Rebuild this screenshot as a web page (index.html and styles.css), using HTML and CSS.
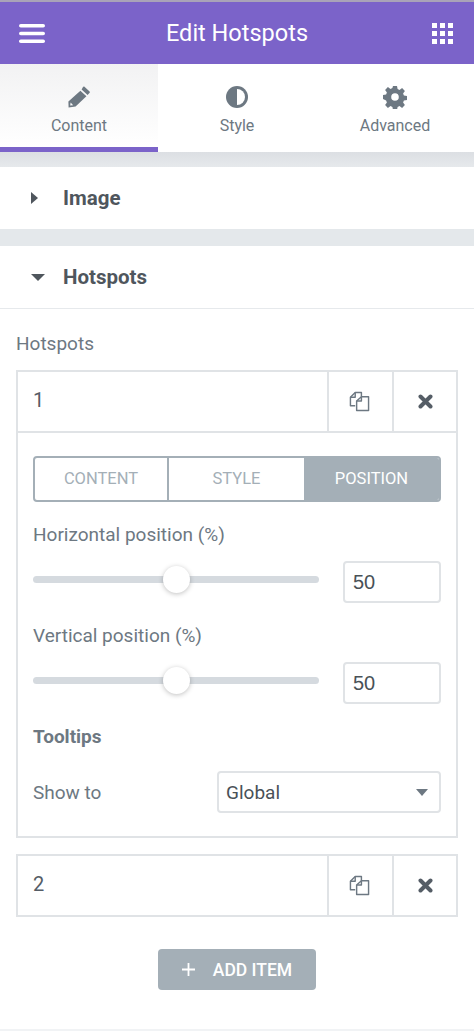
FILE: index.html
```html
<!DOCTYPE html>
<html>

<head>
	<title>Edit Hotspots</title>
	<link rel="stylesheet" href="styles.css">
</head>

<body>
	<div class="panel">

		<header class="topbar">
			<svg class="menu_icon" width="26" height="19" viewBox="0 0 26 19" fill="#fff">
				<rect x="0" y="0" width="26" height="3.6" rx="1.8"/>
				<rect x="0" y="7.7" width="26" height="3.6" rx="1.8"/>
				<rect x="0" y="15.4" width="26" height="3.6" rx="1.8"/>
			</svg>
			<div class="title">Edit Hotspots</div>
			<svg class="grid_icon" width="21" height="21" viewBox="0 0 21 21" fill="#fff">
				<rect x="0" y="0" width="5" height="5"/><rect x="8" y="0" width="5" height="5"/><rect x="16" y="0" width="5" height="5"/>
				<rect x="0" y="8" width="5" height="5"/><rect x="8" y="8" width="5" height="5"/><rect x="16" y="8" width="5" height="5"/>
				<rect x="0" y="16" width="5" height="5"/><rect x="8" y="16" width="5" height="5"/><rect x="16" y="16" width="5" height="5"/>
			</svg>
		</header>

		<nav class="tabs">
			<div class="tab active">
				<svg width="24" height="24" viewBox="0 0 24 24" fill="#6d7882">
					<path d="M17.2 1.6 L22.6 6.4 a1 1 0 0 1 0 1.4 L20.6 10 L14.6 4.6 L16 2 a1 1 0 0 1 1.2-.4z"/>
					<path d="M13.4 5.8 L19.4 11.2 L8.6 21.4 L1.6 22.6 L1.4 16.4z M3.6 17.6 L3.2 20.6 L6.2 20.2z" fill-rule="evenodd"/>
				</svg>
				<span>Content</span>
			</div>
			<div class="tab">
				<svg width="24" height="24" viewBox="0 0 24 24">
					<circle cx="12" cy="12" r="11" fill="#6d7882"/>
					<path d="M12 4 a8 8 0 0 1 0 16z" fill="#fff"/>
				</svg>
				<span>Style</span>
			</div>
			<div class="tab">
				<svg width="24" height="24" viewBox="0 0 24 24" fill="#6d7882">
					<path fill-rule="evenodd" d="M10 1h4l.6 3.1 1.9.8 2.6-1.8 2.8 2.8-1.8 2.6.8 1.9 3.1.6v4l-3.1.6-.8 1.9 1.8 2.6-2.8 2.8-2.6-1.8-1.9.8-.6 3.1h-4l-.6-3.1-1.9-.8-2.6 1.8-2.8-2.8 1.8-2.6-.8-1.9L0 14v-4l3.1-.6.8-1.9L2.1 4.9l2.8-2.8 2.6 1.8 1.9-.8zM12 8.2a3.8 3.8 0 1 0 0 7.6 3.8 3.8 0 0 0 0-7.6z"/>
				</svg>
				<span>Advanced</span>
			</div>
		</nav>

		<div class="gap first"></div>

		<div class="section">
			<span class="arrow_right"></span>
			<span class="section_name">Image</span>
		</div>

		<div class="gap"></div>

		<div class="section open">
			<span class="arrow_down"></span>
			<span class="section_name">Hotspots</span>
		</div>

		<div class="content">
			<div class="repeater_label">Hotspots</div>

			<div class="item">
				<div class="item_num">1</div>
				<div class="item_btn">
					<svg class="copy_icon" width="21" height="21" viewBox="0 0 22 22" fill="#fff" stroke="#6d7882" stroke-width="1.5" stroke-linejoin="round">
						<path d="M6.5 15.5H1.5V6.5L6.5 1.5H13V6"/>
						<path d="M6.5 1.5V6.5H1.5" fill="none"/>
						<path d="M8 20.5V10.5L13 6H20.5V20.5z"/>
						<path d="M13 6V10.5H8" fill="none"/>
					</svg>
				</div>
				<div class="item_btn">
					<svg width="15" height="15" viewBox="0 0 15 15" stroke="#555d66" stroke-width="4" stroke-linecap="round">
						<path d="M2.5 2.5L12.5 12.5M12.5 2.5L2.5 12.5"/>
					</svg>
				</div>
			</div>

			<div class="item_body">
				<div class="switcher">
					<div class="switch">CONTENT</div>
					<div class="switch">STYLE</div>
					<div class="switch on">POSITION</div>
				</div>

				<div class="field_label">Horizontal position (%)</div>
				<div class="slider_row">
					<div class="slider"><span class="thumb"></span></div>
					<div class="number">50</div>
				</div>

				<div class="field_label">Vertical position (%)</div>
				<div class="slider_row">
					<div class="slider"><span class="thumb"></span></div>
					<div class="number">50</div>
				</div>

				<div class="tooltips">Tooltips</div>

				<div class="select_row">
					<div class="select_label">Show to</div>
					<div class="select">
						<span>Global</span>
						<span class="select_arrow"></span>
					</div>
				</div>
			</div>

			<div class="item second_item">
				<div class="item_num">2</div>
				<div class="item_btn">
					<svg class="copy_icon" width="21" height="21" viewBox="0 0 22 22" fill="#fff" stroke="#6d7882" stroke-width="1.5" stroke-linejoin="round">
						<path d="M6.5 15.5H1.5V6.5L6.5 1.5H13V6"/>
						<path d="M6.5 1.5V6.5H1.5" fill="none"/>
						<path d="M8 20.5V10.5L13 6H20.5V20.5z"/>
						<path d="M13 6V10.5H8" fill="none"/>
					</svg>
				</div>
				<div class="item_btn">
					<svg width="15" height="15" viewBox="0 0 15 15" stroke="#555d66" stroke-width="4" stroke-linecap="round">
						<path d="M2.5 2.5L12.5 12.5M12.5 2.5L2.5 12.5"/>
					</svg>
				</div>
			</div>

			<div class="add_wrap">
				<div class="add_item">
					<svg width="13" height="13" viewBox="0 0 13 13" stroke="#fff" stroke-width="1.8">
						<path d="M6.5 0V13M0 6.5H13"/>
					</svg>
					<span>ADD ITEM</span>
				</div>
			</div>
		</div>

	</div>
</body>
</html>
```

FILE: styles.css
```css
* {
	box-sizing: border-box;
}
html, body {
	margin: 0;
	height: 100%;
	background: #fff;
}
.panel {
	height: 1031px;
	overflow: hidden;
	border-bottom: 2px solid #f1f3f5;
	font-family: Roboto, "Liberation Sans", sans-serif;
	color: #6d7882;
}
.topbar {
	height: 64px;
	border-top: 2px solid #a9a3b8;
	background: #7b63c9;
	display: flex;
	align-items: center;
	justify-content: space-between;
	padding: 0 21px 0 19px;
}
.title {
	margin-right: 3px;
	font-size: 23.5px;
	color: #fff;
}
.tabs {
	display: flex;
	height: 88px;
}
.tab {
	flex: 1;
	display: flex;
	flex-direction: column;
	align-items: center;
	padding-top: 21px;
	gap: 7px;
	font-size: 16px;
}
.tab svg {
	display: block;
}
.tab.active {
	background: linear-gradient(#f2f2f3, #fff);
	border-bottom: 5px solid #7b63c9;
}
.gap {
	height: 17px;
	background: #e4e8eb;
}
.gap.first {
	height: 15px;
	background: linear-gradient(#dcdfe3, #e6e9ec);
}
.section {
	height: 62px;
	display: flex;
	align-items: center;
	padding-left: 31px;
}
.section.open {
	height: 63px;
	border-bottom: 1px solid #e6e9ec;
}
.section_name {
	font-size: 20.5px;
	font-weight: 700;
	color: #4f565d;
}
.arrow_right {
	width: 0;
	height: 0;
	margin-right: 25px;
	border-left: 7px solid #4f565d;
	border-top: 6px solid transparent;
	border-bottom: 6px solid transparent;
}
.arrow_down {
	width: 0;
	height: 0;
	margin-right: 18px;
	border-top: 7px solid #4f565d;
	border-left: 7px solid transparent;
	border-right: 7px solid transparent;
}
.content {
	padding: 24px 16px 0;
}
.repeater_label {
	height: 37px;
	font-size: 19px;
	line-height: 22px;
}
.item {
	display: flex;
	height: 63px;
	border: 2px solid #e0e3e6;
}
.second_item {
	margin-top: 16px;
}
.item_num {
	flex: 1;
	padding-left: 15px;
	font-size: 20px;
	line-height: 56px;
	color: #555d66;
}
.item_btn {
	width: 65px;
	border-left: 2px solid #e0e3e6;
	display: flex;
	align-items: center;
	justify-content: center;
}
.item_btn:last-child {
	width: 64px;
}
.copy_icon {
	margin-right: 2px;
}
.item_body {
	height: 405px;
	border: 2px solid #e0e3e6;
	border-top: 0;
	padding: 23px 15px 0;
}
.switcher {
	display: flex;
	height: 46px;
	border: 2px solid #a4afb7;
	border-radius: 4px;
	overflow: hidden;
}
.switch {
	width: 135px;
	text-align: center;
	font-size: 16.5px;
	line-height: 42px;
	color: #a4afb7;
}
.switch:first-child {
	width: 134px;
	border-right: 2px solid #a4afb7;
}
.switch.on {
	background: #a4afb7;
	color: #fff;
}
.field_label {
	margin-top: 21px;
	font-size: 19px;
	line-height: 24px;
}
.slider_row {
	display: flex;
	align-items: center;
	justify-content: space-between;
	margin-top: 14px;
}
.slider {
	position: relative;
	width: 286px;
	height: 7px;
	margin-bottom: 6px;
	border-radius: 4px;
	background: #d5dadf;
}
.thumb {
	position: absolute;
	left: 130px;
	top: -10px;
	width: 27px;
	height: 27px;
	border-radius: 50%;
	background: #fff;
	box-shadow: 0 1px 5px rgba(0, 0, 0, .25);
}
.number {
	width: 98px;
	height: 42px;
	border: 2px solid #e0e3e6;
	border-radius: 4px;
	padding-left: 8px;
	font-family: "Liberation Sans", sans-serif;
	font-size: 20px;
	line-height: 39px;
	color: #495157;
}
.tooltips {
	margin-top: 21px;
	font-size: 19px;
	font-weight: 700;
	line-height: 24px;
}
.select_row {
	display: flex;
	align-items: center;
	justify-content: space-between;
	margin-top: 22px;
}
.select_label {
	font-size: 19px;
}
.select {
	width: 224px;
	height: 42px;
	border: 2px solid #e0e3e6;
	border-radius: 4px;
	display: flex;
	align-items: center;
	justify-content: space-between;
	padding: 0 11px 0 7px;
	font-size: 19px;
	color: #495157;
}
.select_arrow {
	width: 0;
	height: 0;
	border-top: 7px solid #6d7882;
	border-left: 6px solid transparent;
	border-right: 6px solid transparent;
}
.add_wrap {
	display: flex;
	justify-content: center;
	margin-top: 32px;
}
.add_item {
	width: 158px;
	height: 41px;
	background: #a4afb7;
	border-radius: 4px;
	display: flex;
	align-items: center;
	justify-content: center;
	gap: 18px;
	font-size: 17.5px;
	font-weight: 500;
	color: #fff;
}
```
